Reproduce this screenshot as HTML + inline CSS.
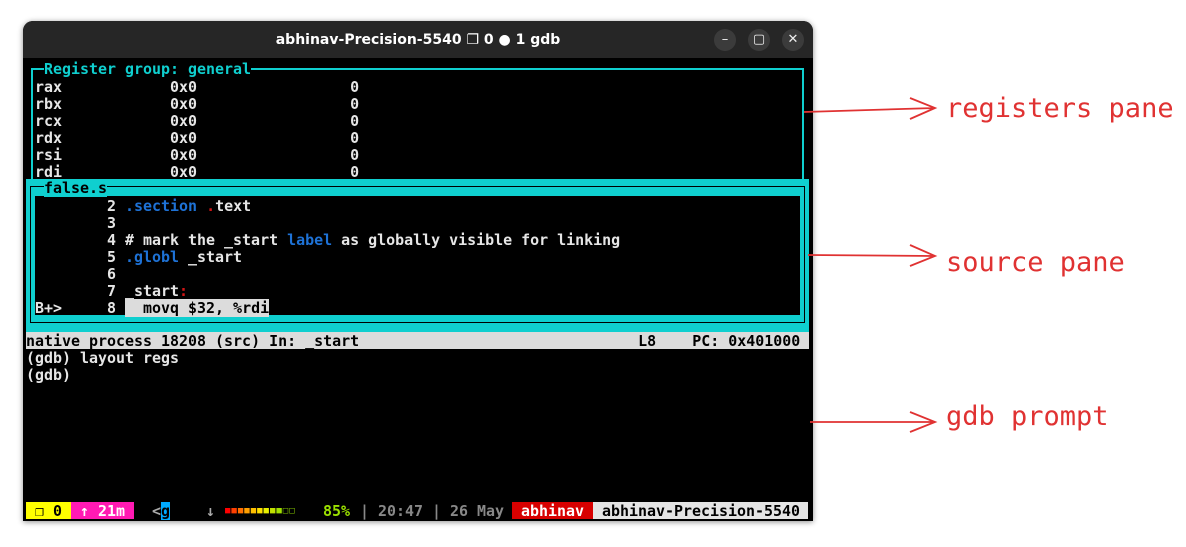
<!DOCTYPE html>
<html><head><meta charset="utf-8"><style>
*{margin:0;padding:0;box-sizing:border-box}
body{width:1186px;height:547px;background:#fff;position:relative;overflow:hidden;font-family:"DejaVu Sans Mono",monospace}
.win{position:absolute;left:23px;top:21px;width:790px;height:500px;background:#000;border-radius:10px 10px 0 0;box-shadow:0 1px 6px rgba(0,0,0,.45);overflow:hidden}
.tb{position:absolute;left:0;top:0;width:790px;height:37px;background:#262626;color:#fff;font:bold 14px "DejaVu Sans",sans-serif;text-align:center;line-height:38px}
.btn{position:absolute;top:8px;width:22px;height:22px;border-radius:50%;background:#3b3b3b;color:#eee;font:13px "DejaVu Sans",sans-serif;line-height:22px;text-align:center}
.t{position:absolute;font-size:14.96px;font-weight:bold;line-height:17px;white-space:pre;color:#e6e6e6}
.ab{position:absolute;background:#0fcfcf}
.b{color:#1e72d6}.r{color:#d01515}
.ann{position:absolute;color:#e03232;font:27px "DejaVu Sans Mono",monospace;white-space:pre}
</style></head><body>
<div class="win">
 <div class="tb">abhinav-Precision-5540 ❐ 0 ● 1 gdb</div>
 <div class="btn" style="left:691px">–</div>
 <div class="btn" style="left:725px">▢</div>
 <div class="btn" style="left:759px">✕</div>
</div>
<div style="position:absolute;left:31px;top:68px;width:773px;height:115px;border:2px solid #0fcfcf;border-bottom:none"></div>
<div class="t" style="left:44px;top:61px;color:#0fcfcf;background:#000">Register group: general</div>
<div class="t" style="left:35px;top:79px">rax            0x0                 0
rbx            0x0                 0
rcx            0x0                 0
rdx            0x0                 0
rsi            0x0                 0
rdi            0x0                 0</div>
<div class="ab" style="left:26px;top:179px;width:783px;height:153px"></div>
<div style="position:absolute;left:30px;top:186px;width:775px;height:137px;border:1px solid #000;background:#0fcfcf"></div>
<div style="position:absolute;left:35px;top:196px;width:765px;height:119px;background:#000"></div>
<div class="t" style="left:44px;top:180px;color:#000;background:#0fcfcf">false.s</div>
<div class="t" style="left:35px;top:198px">        2 <span class="b">.section</span> <span class="r">.</span>text
        3
        4 # mark the _start <span class="b">label</span> as globally visible for linking
        5 <span class="b">.globl</span> _start
        6
        7 _start<span class="r">:</span>
B+>     8 <span style="background:#dcdcdc;color:#000">  movq $32, %rdi</span></div>
<div class="t" style="left:26px;top:332px;width:783px;height:17px;background:#dcdcdc;color:#000;padding-top:1px">native process 18208 (src) In: _start                               L8    PC: 0x401000</div>
<div class="t" style="left:26px;top:350px">(gdb) layout regs
(gdb)</div>
<div class="t" style="left:26px;top:502px;width:45px;height:17px;background:#ffff00;color:#000;padding-top:1px"> ❐ 0</div>
<div class="t" style="left:71px;top:502px;width:63px;height:17px;background:#ff1ab3;color:#fff;padding-top:1px"> ↑ 21m</div>
<div class="t" style="left:143px;top:503px;color:#aaa"> &lt;<span style="background:#00aaff;color:#000">g</span></div>
<div class="t" style="left:206px;top:503px;color:#aaa">↓</div>
<div style="position:absolute;left:225px;top:507px;font-size:9px;line-height:9px;letter-spacing:1px;white-space:pre"><span style="color:#f00">■</span><span style="color:#ff4000">■</span><span style="color:#ff7000">■</span><span style="color:#ffa000">■</span><span style="color:#ffc000">■</span><span style="color:#ffe000">■</span><span style="color:#e8f000">■</span><span style="color:#c0e000">■</span><span style="color:#a0e000">■</span><span style="color:#80c000">□□</span></div>
<div class="t" style="left:323px;top:503px;color:#9be000">85%</div>
<div class="t" style="left:360px;top:503px;color:#888">| 20:47 | 26 May</div>
<div class="t" style="left:512px;top:502px;width:81px;height:17px;background:#d70000;color:#fff;padding-top:1px"> abhinav</div>
<div class="t" style="left:593px;top:502px;width:215px;height:17px;background:#e4e4e4;color:#000;padding-top:1px"> abhinav-Precision-5540</div>
<svg style="position:absolute;left:0;top:0" width="1186" height="547">
<g stroke="#e03232" stroke-width="1.8" fill="none">
<path d="M804 112 L935 108 M910 98 L935 108 L910 119"/>
<path d="M808 255 L935 256 M910 245 L935 256 L910 266"/>
<path d="M810 422 L935 422 M910 412 L935 422 L910 432"/>
</g></svg>
<div class="ann" style="left:946px;top:93px">registers pane</div>
<div class="ann" style="left:946px;top:247px">source pane</div>
<div class="ann" style="left:946px;top:401px">gdb prompt</div>
</body></html>
